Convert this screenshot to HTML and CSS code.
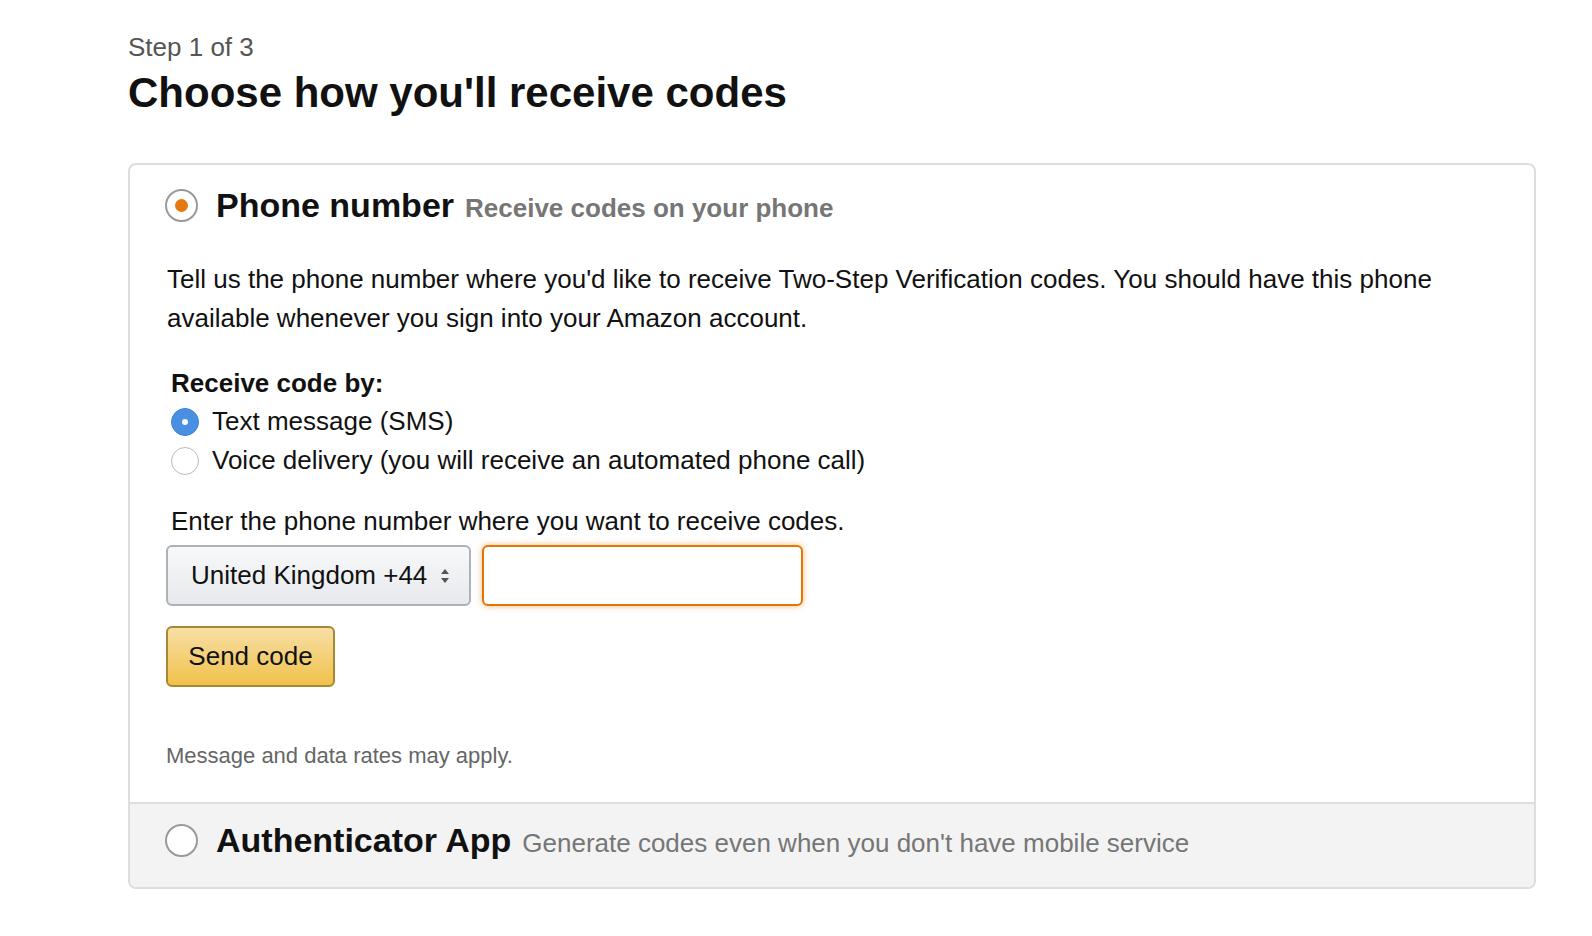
FILE: index.html
```html
<!DOCTYPE html>
<html lang="en">

<head>
  <meta charset="UTF-8" />
  <meta name="viewport" content="width=device-width, initial-scale=1.0" />
  <title>Two-Step Verification</title>
  <link rel="stylesheet" href="styles.css">
</head>

<body>
  <main class="pagina">
    <p class="paso">Step 1 of 3</p>
    <h1>Choose how you'll receive codes</h1>

    <div class="caja">
      <section class="opcion activa">
        <div class="opcion-titulo">
          <span class="radio-grande marcado"></span>
          <span class="nombre">Phone number</span>
          <span class="subtitulo negrita">Receive codes on your phone</span>
        </div>

        <p class="texto">Tell us the phone number where you'd like to receive Two-Step Verification codes. You should have this phone available whenever you sign into your Amazon account.</p>

        <div class="metodo">
          <p class="etiqueta">Receive code by:</p>
          <label class="fila-radio"><span class="radio-peq azul"></span>Text message (SMS)</label>
          <label class="fila-radio"><span class="radio-peq"></span>Voice delivery (you will receive an automated phone call)</label>
        </div>

        <p class="indicacion">Enter the phone number where you want to receive codes.</p>
        <div class="campos">
          <div class="selector">
            <span>United Kingdom +44</span>
            <svg class="flechas" width="10" height="16" viewBox="0 0 10 16">
              <path d="M5 1 L9 6 H1 Z" fill="#555" />
              <path d="M5 15 L9 10 H1 Z" fill="#555" />
            </svg>
          </div>
          <div class="entrada"></div>
        </div>

        <button class="boton-enviar">Send code</button>

        <p class="aviso">Message and data rates may apply.</p>
      </section>

      <section class="opcion gris">
        <div class="opcion-titulo">
          <span class="radio-grande"></span>
          <span class="nombre">Authenticator App</span>
          <span class="subtitulo">Generate codes even when you don't have mobile service</span>
        </div>
      </section>
    </div>
  </main>
</body>

</html>
```

FILE: styles.css
```css
body {
  margin: 0;
  font-family: "Liberation Sans", Arial, sans-serif;
  color: #111;
  background-color: #fff;
}

.pagina {
  padding: 32px 40px 30px 128px;
}

.paso {
  margin: 0;
  font-size: 26px;
  color: #555;
}

h1 {
  margin: 6px 0 0;
  font-size: 42px;
  font-weight: bold;
  color: #111;
}

.caja {
  margin-top: 46px;
  width: 1408px;
  box-sizing: border-box;
  border: 2px solid #ddd;
  border-radius: 8px;
  overflow: hidden;
}

.opcion {
  padding: 21px 36px 0 35px;
}

.activa {
  padding-bottom: 33px;
}

.gris {
  background-color: #f3f3f3;
  border-top: 2px solid #ddd;
  padding-top: 17px;
  padding-bottom: 27px;
}

.opcion-titulo {
  display: flex;
  align-items: center;
}

.radio-grande {
  width: 29px;
  height: 29px;
  border: 2px solid #999;
  border-radius: 50%;
  background: #fff;
  margin-right: 18px;
  position: relative;
  flex-shrink: 0;
}

.radio-grande.marcado::after {
  content: "";
  position: absolute;
  top: 8px;
  left: 8px;
  width: 13px;
  height: 13px;
  border-radius: 50%;
  background-color: #e47911;
}

.nombre {
  font-size: 34px;
  font-weight: bold;
  color: #111;
  margin-right: 11px;
}

.subtitulo {
  font-size: 26px;
  color: #767676;
  margin-top: 6px;
}

.negrita {
  font-weight: bold;
}

.texto {
  margin: 35px 0 0 2px;
  font-size: 26px;
  line-height: 39px;
}

.metodo {
  margin: 26px 0 0 6px;
}

.etiqueta {
  margin: 0;
  font-size: 26px;
  font-weight: bold;
  line-height: 38px;
}

.fila-radio {
  display: flex;
  align-items: center;
  font-size: 26px;
  line-height: 39px;
}

.radio-peq {
  width: 26px;
  height: 26px;
  border: 1px solid #bbb;
  border-radius: 50%;
  background: #fff;
  margin-right: 13px;
  position: relative;
}

.radio-peq.azul {
  background-color: #4a90e2;
  border-color: #3c82d6;
}

.radio-peq.azul::after {
  content: "";
  position: absolute;
  top: 10px;
  left: 10px;
  width: 6px;
  height: 6px;
  border-radius: 50%;
  background-color: #fff;
}

.indicacion {
  margin: 22px 0 0 6px;
  font-size: 26px;
  line-height: 39px;
}

.campos {
  display: flex;
  gap: 11px;
  margin-top: 4px;
  margin-left: 1px;
}

.selector {
  width: 305px;
  height: 61px;
  box-sizing: border-box;
  border: 2px solid #adb1b8;
  border-radius: 6px;
  background: linear-gradient(to bottom, #f7f8fa, #e7e9ec);
  display: flex;
  align-items: center;
  justify-content: space-between;
  padding: 0 19px 0 23px;
  font-size: 26px;
}

.entrada {
  width: 321px;
  height: 61px;
  box-sizing: border-box;
  border: 2px solid #e77600;
  border-radius: 6px;
  background: #fff;
  box-shadow: 0 0 6px rgba(228, 121, 17, 0.5);
}

.boton-enviar {
  display: block;
  margin: 20px 0 0 1px;
  width: 169px;
  height: 61px;
  border: 2px solid #a88734;
  border-radius: 6px;
  background: linear-gradient(to bottom, #f7dfa5, #f0c14b);
  font-family: "Liberation Sans", Arial, sans-serif;
  font-size: 26px;
  color: #111;
  cursor: pointer;
}

.aviso {
  margin: 56px 0 0 1px;
  font-size: 22px;
  color: #666;
}
```
